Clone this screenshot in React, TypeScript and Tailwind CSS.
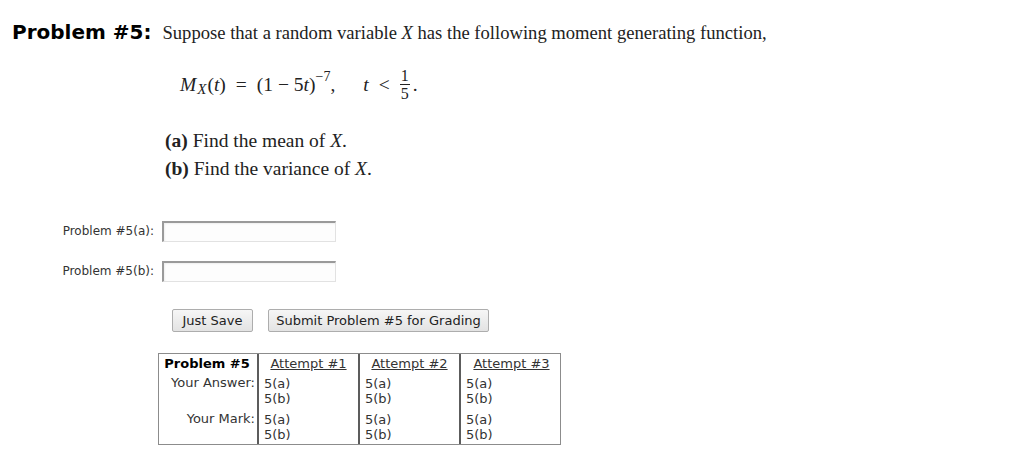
import React from 'react';

const sans = "font-['DejaVu_Sans',Verdana,sans-serif]";
const serif = "font-['Liberation_Serif','Times_New_Roman',serif]";

function Cell({ children }: { children: React.ReactNode }) {
  return <div className="leading-[15px]">{children}</div>;
}

export default function App() {
  const attempts = ['Attempt #1', 'Attempt #2', 'Attempt #3'];

  return (
    <div className="w-[1024px] h-[457px] bg-white text-black overflow-hidden relative">
      {/* Heading */}
      <div className="flex items-baseline pt-[18px] pl-[12px]">
        <span className={`${sans} font-bold text-[20px] leading-[28px]`}>Problem #5:</span>
        <span className={`${serif} text-[18.6px] ml-[11px] text-[#222]`}>
          Suppose that a random variable <i>X</i> has the following moment generating function,
        </span>
      </div>

      {/* Formula */}
      <div className={`${serif} text-[19.5px] text-[#222] flex items-center ml-[180px] mt-[18px] h-[40px]`}>
        <span className="italic">M</span>
        <span className="italic text-[15px] relative top-[4px] ml-[1px]">X</span>
        <span className="ml-[1px]">(<i>t</i>)</span>
        <span className="mx-[10px]">=</span>
        <span>(1 − 5<i>t</i>)</span>
        <span className="text-[14px] relative -top-[8px]">−7</span>
        <span>,</span>
        <span className="ml-[28px] italic">t</span>
        <span className="mx-[10px]">&lt;</span>
        <span className="inline-flex flex-col items-center text-[16px] leading-[17px]">
          <span>1</span>
          <span className="w-[10px] border-t border-[#222]" />
          <span>5</span>
        </span>
        <span className="ml-[3px]">.</span>
      </div>

      {/* Parts */}
      <div className={`${serif} text-[19.5px] text-[#222] ml-[165px] mt-[22px] leading-[28px]`}>
        <div><b>(a)</b> Find the mean of <i>X</i>.</div>
        <div><b>(b)</b> Find the variance of <i>X</i>.</div>
      </div>

      {/* Answer inputs */}
      <div className={`${sans} text-[12px] text-[#333] mt-[38px] flex flex-col gap-[19px]`}>
        {['a', 'b'].map(p => (
          <div key={p} className="flex items-center">
            <span className="w-[162px] pr-[8px] text-right">Problem #5({p}):</span>
            <div className="w-[174px] h-[21px] bg-[#fdfdfd] border-t-[2px] border-l-[2px] border-[#9a9a9a] border-r border-b border-r-[#e2e2e2] border-b-[#e2e2e2] shadow-[inset_1px_1px_2px_rgba(0,0,0,0.06)]" />
          </div>
        ))}
      </div>

      {/* Buttons */}
      <div className={`${sans} text-[13px] text-[#222] flex gap-[15px] ml-[172px] mt-[27px]`}>
        <button className="h-[23px] w-[81px] border border-[#adadad] bg-gradient-to-b from-[#f6f6f6] to-[#e3e3e3] rounded-[2px]">Just Save</button>
        <button className="h-[23px] w-[221px] border border-[#adadad] bg-gradient-to-b from-[#f6f6f6] to-[#e3e3e3] rounded-[2px]">Submit Problem #5 for Grading</button>
      </div>

      {/* Attempts table */}
      <div className={`${sans} text-[13px] text-[#333] ml-[158px] mt-[21px] w-[403px] border border-[#8c8c8c] grid grid-cols-[100px_101px_101px_101px]`}>
        <div className="border-r-2 border-[#5c5c5c] text-right pr-[2px] pt-[1px]">
          <div className="font-bold text-black leading-[18px] text-center">Problem #5</div>
          <div className="leading-[18px] mt-[1px]">Your Answer:</div>
          <div className="leading-[18px] mt-[18px] mb-[16px]">Your Mark:</div>
        </div>
        {attempts.map((a, i) => (
          <div key={a} className={`${i < 2 ? 'border-r-2 border-[#5c5c5c]' : ''} pt-[1px]`}>
            <div className="text-center underline leading-[18px]">{a}</div>
            <div className="pl-[5px] pt-[3px]">
              <Cell>5(a)</Cell>
              <Cell>5(b)</Cell>
            </div>
            <div className="pl-[5px] pt-[6px]">
              <Cell>5(a)</Cell>
              <Cell>5(b)</Cell>
            </div>
          </div>
        ))}
      </div>
    </div>
  );
}
